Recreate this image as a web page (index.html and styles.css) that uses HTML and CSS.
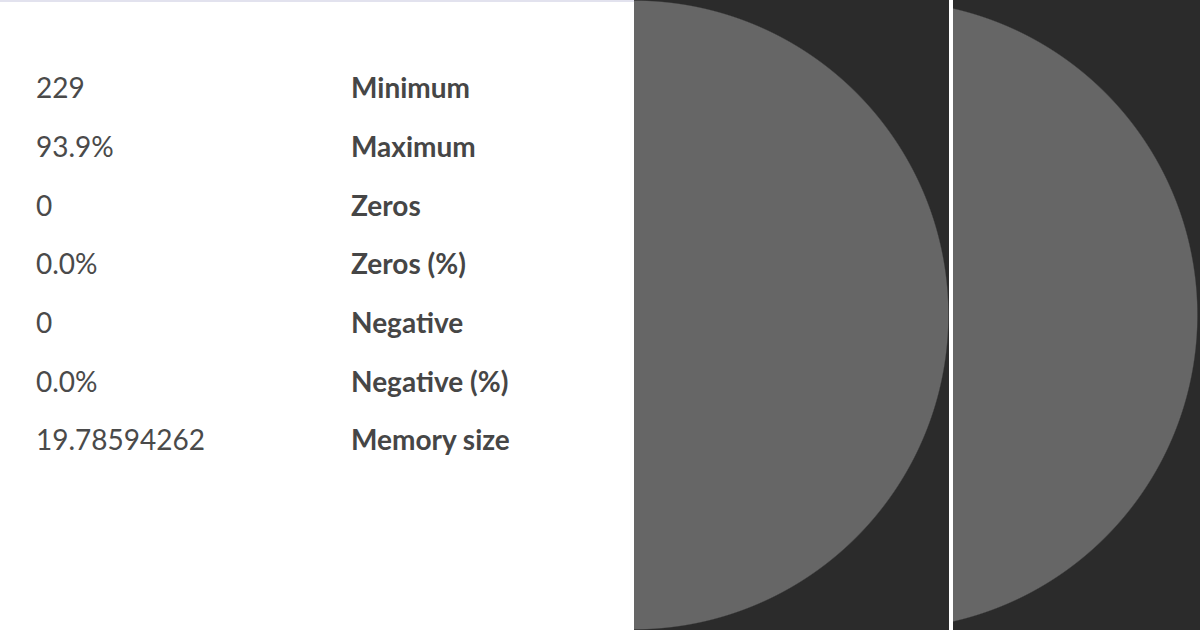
FILE: index.html
```html
<!DOCTYPE html>
<html>
<head>
<meta charset="utf-8">
<link rel="stylesheet" href="styles.css">
</head>
<body>
<div class="page">
  <section class="stats">
    <div class="table">
      <div class="val">229</div><div class="lbl">Minimum</div>
      <div class="val">93.9%</div><div class="lbl">Maximum</div>
      <div class="val">0</div><div class="lbl">Zeros</div>
      <div class="val">0.0%</div><div class="lbl">Zeros (%)</div>
      <div class="val">0</div><div class="lbl">Negative</div>
      <div class="val">0.0%</div><div class="lbl">Negative (%)</div>
      <div class="val">19.78594262</div><div class="lbl">Memory size</div>
    </div>
  </section>
  <div class="thumb thumb-a"></div>
  <div class="divider"></div>
  <div class="thumb thumb-b"></div>
</div>
</body>
</html>
```

FILE: styles.css
```css
html, body {
  margin: 0;
  padding: 0;
  width: 1200px;
  height: 630px;
  overflow: hidden;
  background: #ffffff;
}

.page {
  display: flex;
  width: 1200px;
  height: 630px;
}

.stats {
  width: 634px;
  flex: none;
  box-sizing: border-box;
  border-top: 2px solid #e2e2ee;
  background: #ffffff;
  padding: 56px 0 0 36px;
  font-family: Lato, "Open Sans", sans-serif;
  font-size: 28px;
  color: #4a4a4a;
}

.table {
  display: grid;
  grid-template-columns: 315px auto;
  grid-auto-rows: 58.67px;
  align-items: center;
}

.val {
  font-weight: 400;
}

.lbl {
  font-weight: 700;
  color: #464646;
}

.thumb {
  height: 630px;
  background-color: #2b2b2b;
}

.thumb-a {
  width: 315px;
  flex: none;
  background-image: radial-gradient(circle 315px at 0 315px, #666666 99.6%, #2b2b2b 100%);
}

.divider {
  width: 4px;
  flex: none;
  background: #ffffff;
}

.thumb-b {
  flex: 1;
  background-image: radial-gradient(circle 315px at -70px 315px, #666666 99.6%, #2b2b2b 100%);
}
```
